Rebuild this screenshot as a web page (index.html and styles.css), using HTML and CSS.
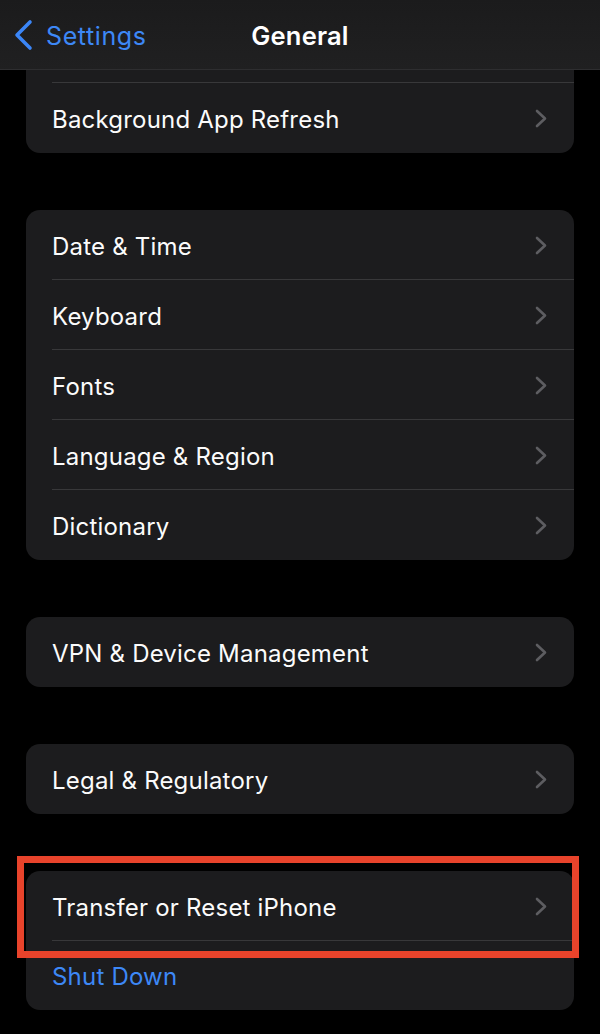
FILE: index.html
```html
<!DOCTYPE html>
<html>
<head>
<meta charset="utf-8">
<link rel="stylesheet" href="styles.css">
</head>
<body>
<header class="nav">
  <div class="back">
    <svg class="back-icon" width="20" height="32" viewBox="0 0 20 32"><path d="M16 3 L3 16 L16 29" fill="none" stroke="#3b86f7" stroke-width="3.6" stroke-linecap="round" stroke-linejoin="round"/></svg>
    <span class="back-label">Settings</span>
  </div>
  <div class="title">General</div>
  <div class="spacer"></div>
</header>
<main class="content">
  <section class="card card-top">
    <div class="stub"></div>
    <div class="row last"><span class="label">Background App Refresh</span><svg class="chev" width="12" height="19" viewBox="0 0 12 19"><path d="M2 2 L10 9.5 L2 17" fill="none" stroke="#5d5d61" stroke-width="2.6" stroke-linecap="round" stroke-linejoin="round"/></svg></div>
  </section>
  <section class="card">
    <div class="row"><span class="label">Date &amp; Time</span><svg class="chev" width="12" height="19" viewBox="0 0 12 19"><path d="M2 2 L10 9.5 L2 17" fill="none" stroke="#5d5d61" stroke-width="2.6" stroke-linecap="round" stroke-linejoin="round"/></svg></div>
    <div class="row"><span class="label">Keyboard</span><svg class="chev" width="12" height="19" viewBox="0 0 12 19"><path d="M2 2 L10 9.5 L2 17" fill="none" stroke="#5d5d61" stroke-width="2.6" stroke-linecap="round" stroke-linejoin="round"/></svg></div>
    <div class="row"><span class="label">Fonts</span><svg class="chev" width="12" height="19" viewBox="0 0 12 19"><path d="M2 2 L10 9.5 L2 17" fill="none" stroke="#5d5d61" stroke-width="2.6" stroke-linecap="round" stroke-linejoin="round"/></svg></div>
    <div class="row"><span class="label">Language &amp; Region</span><svg class="chev" width="12" height="19" viewBox="0 0 12 19"><path d="M2 2 L10 9.5 L2 17" fill="none" stroke="#5d5d61" stroke-width="2.6" stroke-linecap="round" stroke-linejoin="round"/></svg></div>
    <div class="row last"><span class="label">Dictionary</span><svg class="chev" width="12" height="19" viewBox="0 0 12 19"><path d="M2 2 L10 9.5 L2 17" fill="none" stroke="#5d5d61" stroke-width="2.6" stroke-linecap="round" stroke-linejoin="round"/></svg></div>
  </section>
  <section class="card">
    <div class="row last"><span class="label">VPN &amp; Device Management</span><svg class="chev" width="12" height="19" viewBox="0 0 12 19"><path d="M2 2 L10 9.5 L2 17" fill="none" stroke="#5d5d61" stroke-width="2.6" stroke-linecap="round" stroke-linejoin="round"/></svg></div>
  </section>
  <section class="card">
    <div class="row last"><span class="label">Legal &amp; Regulatory</span><svg class="chev" width="12" height="19" viewBox="0 0 12 19"><path d="M2 2 L10 9.5 L2 17" fill="none" stroke="#5d5d61" stroke-width="2.6" stroke-linecap="round" stroke-linejoin="round"/></svg></div>
  </section>
  <section class="card card-last">
    <div class="row"><span class="label">Transfer or Reset iPhone</span><svg class="chev" width="12" height="19" viewBox="0 0 12 19"><path d="M2 2 L10 9.5 L2 17" fill="none" stroke="#5d5d61" stroke-width="2.6" stroke-linecap="round" stroke-linejoin="round"/></svg></div>
    <div class="row last short"><span class="label link">Shut Down</span></div>
    <div class="highlight"></div>
  </section>
</main>
</body>
</html>
```
FILE: styles.css
```css
html, body {
  margin: 0;
  padding: 0;
  background: #000;
}
body {
  font-family: Inter, "Noto Sans", "DejaVu Sans", sans-serif;
  color: #fff;
  width: 600px;
  height: 1034px;
  overflow: hidden;
}
.nav {
  height: 70px;
  display: grid;
  grid-template-columns: 1fr auto 1fr;
  align-items: center;
  background: linear-gradient(#1b1b1c, #202021);
  border-bottom: 1px solid #2e2e30;
  box-sizing: border-box;
}
.back {
  display: flex;
  align-items: center;
  padding-left: 14px;
  gap: 12px;
}
.back-icon {
  display: block;
}
.back-label {
  color: #3d88f6;
  font-size: 25px;
  letter-spacing: 0.6px;
  padding-top: 2px;
}
.title {
  font-size: 25.5px;
  font-weight: 600;
  color: #fff;
  letter-spacing: 0.2px;
  padding-top: 2px;
}
.content {
  padding: 0 26px;
}
.card {
  background: #1c1c1e;
  border-radius: 14px;
  margin-top: 57px;
  position: relative;
}
.card-top {
  margin-top: 0;
  border-radius: 0 0 14px 14px;
  padding-left: 26px;
}
.card-top .row {
  margin-left: -26px;
}
.stub {
  height: 12px;
  border-bottom: 1px solid #38383a;
}
.row {
  height: 70px;
  display: flex;
  align-items: center;
  justify-content: space-between;
  padding: 0 27px 0 26px;
  position: relative;
}
.row::after {
  content: "";
  position: absolute;
  left: 26px;
  right: 0;
  bottom: 0;
  height: 1px;
  background: #38383a;
}
.row.last::after {
  display: none;
}
.row.short {
  height: 69px;
}
.label {
  font-size: 24px;
  letter-spacing: 0.2px;
  color: #fbfbfb;
  padding-top: 2px;
}
.link {
  color: #3d88f6;
}
.chev {
  display: block;
}
.highlight {
  position: absolute;
  top: -15px;
  left: -9px;
  right: -5px;
  height: 102px;
  box-sizing: border-box;
  border: 7px solid #e8432b;
  pointer-events: none;
}
```
